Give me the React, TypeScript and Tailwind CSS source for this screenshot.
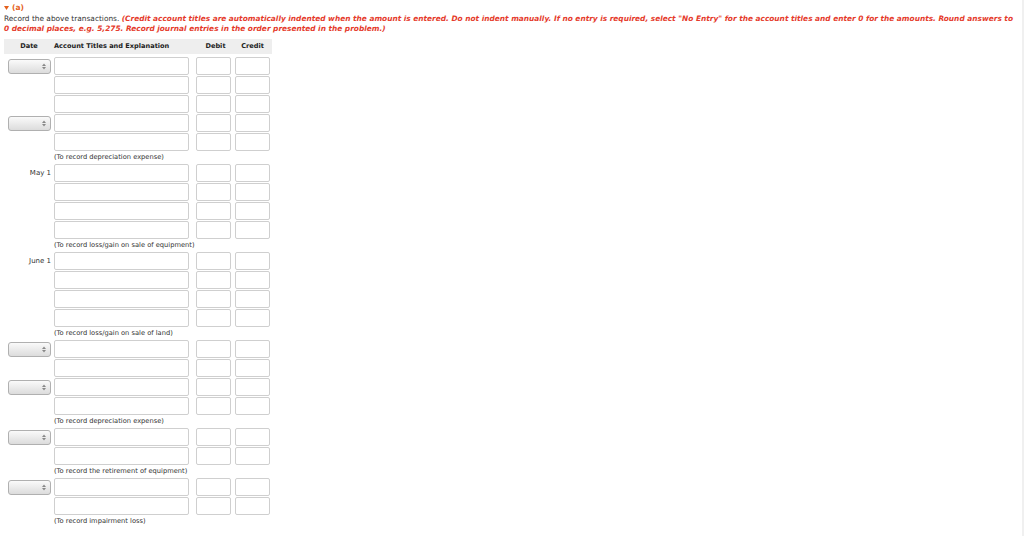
import React from "react";

type Section = { rows: (string | null)[]; note: string };

const SEL = "__select__";

const sections: Section[] = [
  { rows: [SEL, null, null, SEL, null], note: "(To record depreciation expense)" },
  { rows: ["May 1", null, null, null], note: "(To record loss/gain on sale of equipment)" },
  { rows: ["June 1", null, null, null], note: "(To record loss/gain on sale of land)" },
  { rows: [SEL, null, SEL, null], note: "(To record depreciation expense)" },
  { rows: [SEL, null], note: "(To record the retirement of equipment)" },
  { rows: [SEL, null], note: "(To record impairment loss)" },
];

function DateSelect() {
  return (
    <div className="w-[43px] h-[15px] rounded-[3px] border border-[#b0b0b0] bg-gradient-to-b from-[#fafafa] to-[#dcdcdc] flex items-center justify-end pr-[4px]">
      <svg width="4" height="7" viewBox="0 0 4 7">
        <path d="M0 3 L2 0.5 L4 3 Z" fill="#888" />
        <path d="M0 4 L2 6.5 L4 4 Z" fill="#888" />
      </svg>
    </div>
  );
}

function Box({ w }: { w: string }) {
  return <div className={`${w} h-[18px] rounded-[2px] border border-[#cfcfcf] bg-white`} />;
}

function Row({ date }: { date: string | null }) {
  return (
    <div className="flex items-center h-[18px] mb-[1px]">
      <div className="w-[50px] flex justify-end pr-[3px] text-[7px] text-[#333]">
        {date === SEL ? <DateSelect /> : date}
      </div>
      <Box w="w-[135px]" />
      <div className="w-[7px]" />
      <Box w="w-[35px]" />
      <div className="w-[4px]" />
      <Box w="w-[35px]" />
    </div>
  );
}

export default function App() {
  return (
    <div
      className="w-[1024px] h-[536px] bg-white border-r-2 border-[#f0f0f0] overflow-hidden text-[#333]"
      style={{ fontFamily: '"DejaVu Sans", Verdana, sans-serif' }}
    >
      <div className="pl-[4px] pt-[3px]">
        <div className="flex items-center h-[10px] text-[7.5px] font-bold text-[#e4601c] gap-[3px]">
          <svg width="5" height="4" viewBox="0 0 5 4">
            <path d="M0 0 L5 0 L2.5 4 Z" fill="#e4601c" />
          </svg>
          <span>(a)</span>
        </div>
        <p className="mt-[1px] text-[7.4px] leading-[10px] pr-[6px]">
          Record the above transactions.{" "}
          <span className="font-bold italic text-[#e53b2c]">
            (Credit account titles are automatically indented when the amount is entered. Do not indent manually. If no entry is required, select "No Entry" for the account titles and enter 0 for the amounts. Round answers to 0 decimal places, e.g. 5,275. Record journal entries in the order presented in the problem.)
          </span>
        </p>

        <div className="mt-[5px] w-[268px] h-[15px] bg-[#eeeeee] flex items-center text-[6.6px] font-bold text-[#222]">
          <div className="w-[50px] text-center">Date</div>
          <div className="w-[142px]">Account Titles and Explanation</div>
          <div className="w-[39px] text-center">Debit</div>
          <div className="w-[35px] text-center">Credit</div>
        </div>

        <div className="mt-[3px]">
          {sections.map((s, i) => (
            <div key={i}>
              {s.rows.map((d, j) => (
                <Row key={j} date={d} />
              ))}
              <div className="h-[12px] leading-[11px] pl-[50px] text-[6.7px] text-[#333]">{s.note}</div>
            </div>
          ))}
        </div>
      </div>
    </div>
  );
}
